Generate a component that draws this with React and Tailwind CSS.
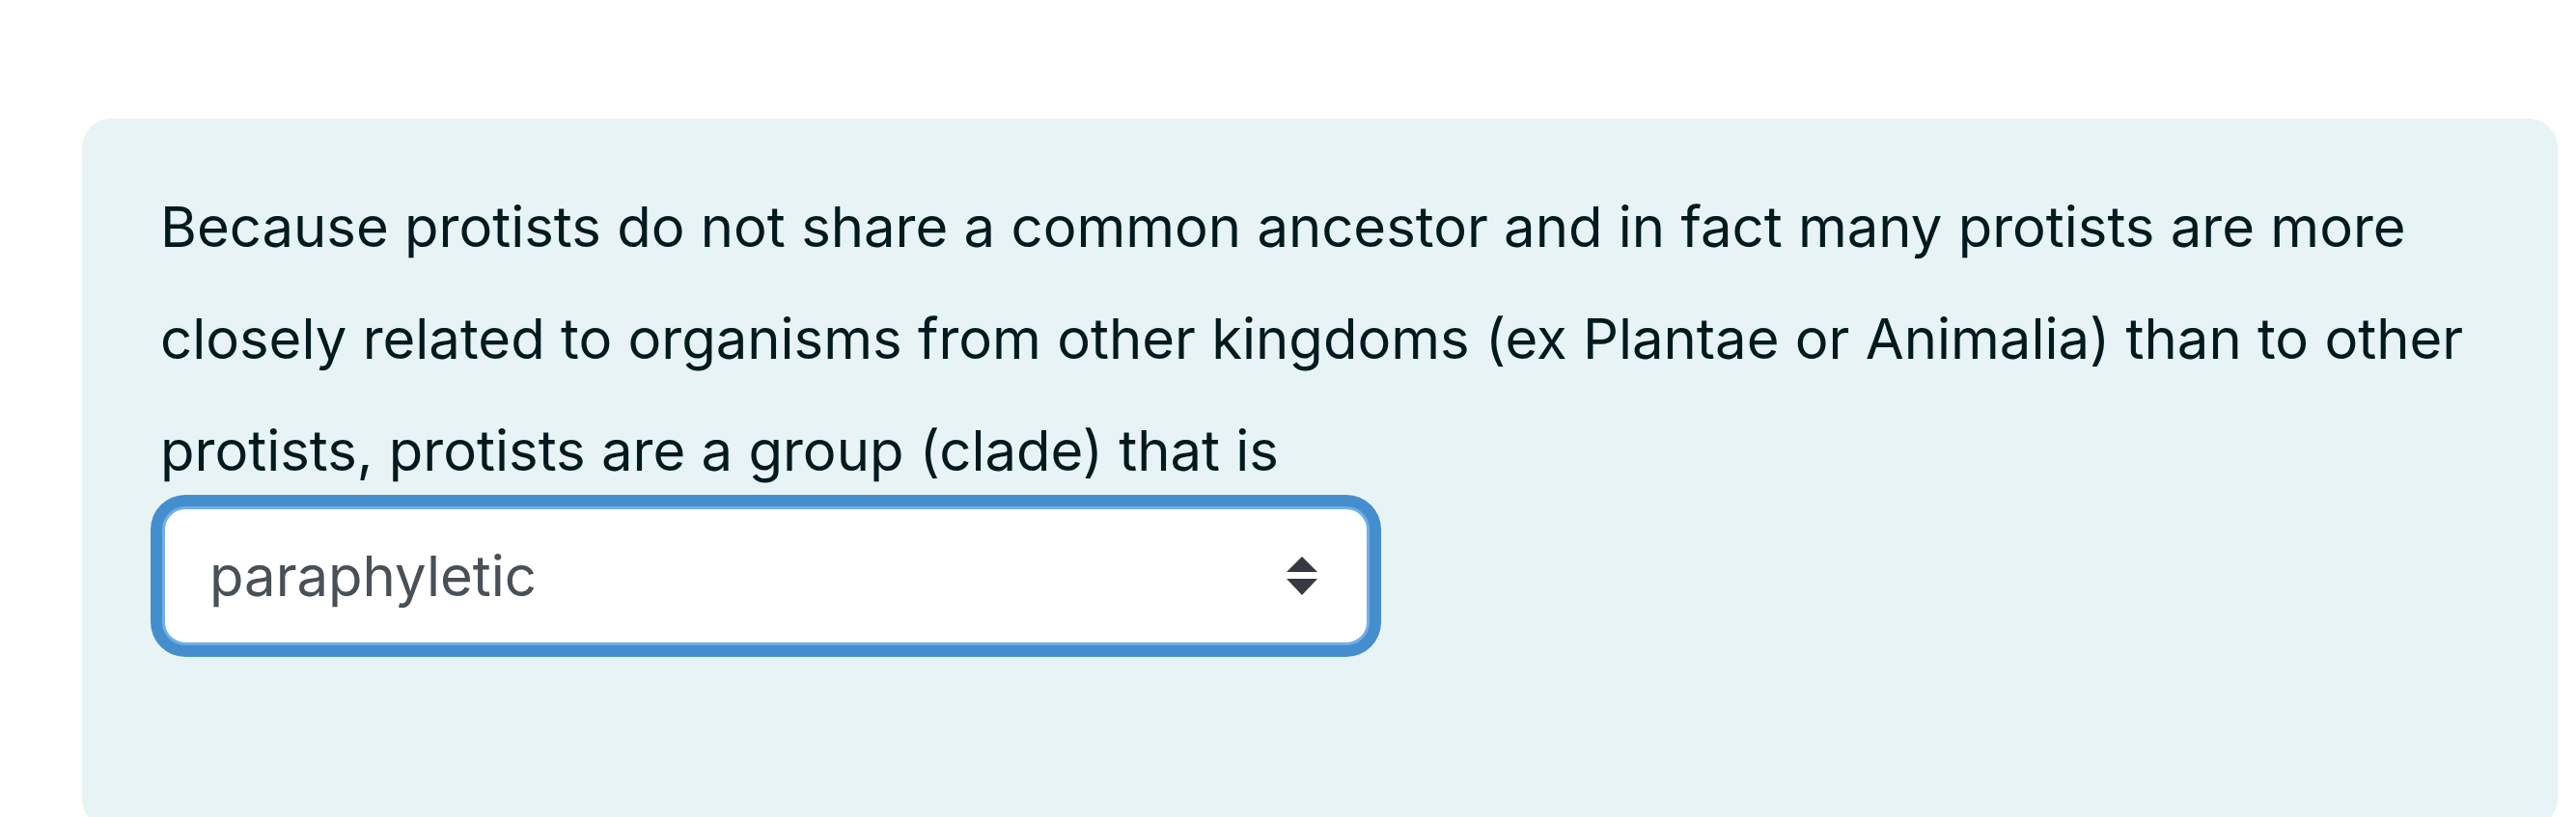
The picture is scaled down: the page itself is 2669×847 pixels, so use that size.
import React from "react";

function SortArrows() {
  return (
    <svg width="32" height="40" viewBox="0 0 32 40" className="shrink-0" aria-hidden="true">
      <path d="M16 0 L32 16 L0 16 Z" fill="#343a40" />
      <path d="M0 23 L32 23 L16 40 Z" fill="#343a40" />
    </svg>
  );
}

export default function App() {
  const font = "font-['Inter','Liberation_Sans',sans-serif]";

  return (
    <div className={`min-h-screen bg-white pt-[123px] pl-[85px] pr-[19px] ${font}`}>
      <div className="h-[735px] rounded-[30px] bg-[#e7f3f5] pt-[54px] pl-[81px] pr-[83px]">
        <p className="text-[58px] leading-[116px] text-[#001a1e]">
          Because protists do not share a common ancestor and in fact many protists are more
          closely related to organisms from other kingdoms (ex Plantae or Animalia) than to other
          protists, protists are a group (clade) that is
        </p>
        <div className="ml-[2px] flex h-[144px] w-[1251px] items-center justify-between rounded-[24px] border-[3px] border-[#6fb0ea] bg-white pl-[46px] pr-[51px] shadow-[0_0_0_12px_#458ecd]">
          <span className="text-[58px] leading-none text-[#495057]">paraphyletic</span>
          <SortArrows />
        </div>
      </div>
    </div>
  );
}
